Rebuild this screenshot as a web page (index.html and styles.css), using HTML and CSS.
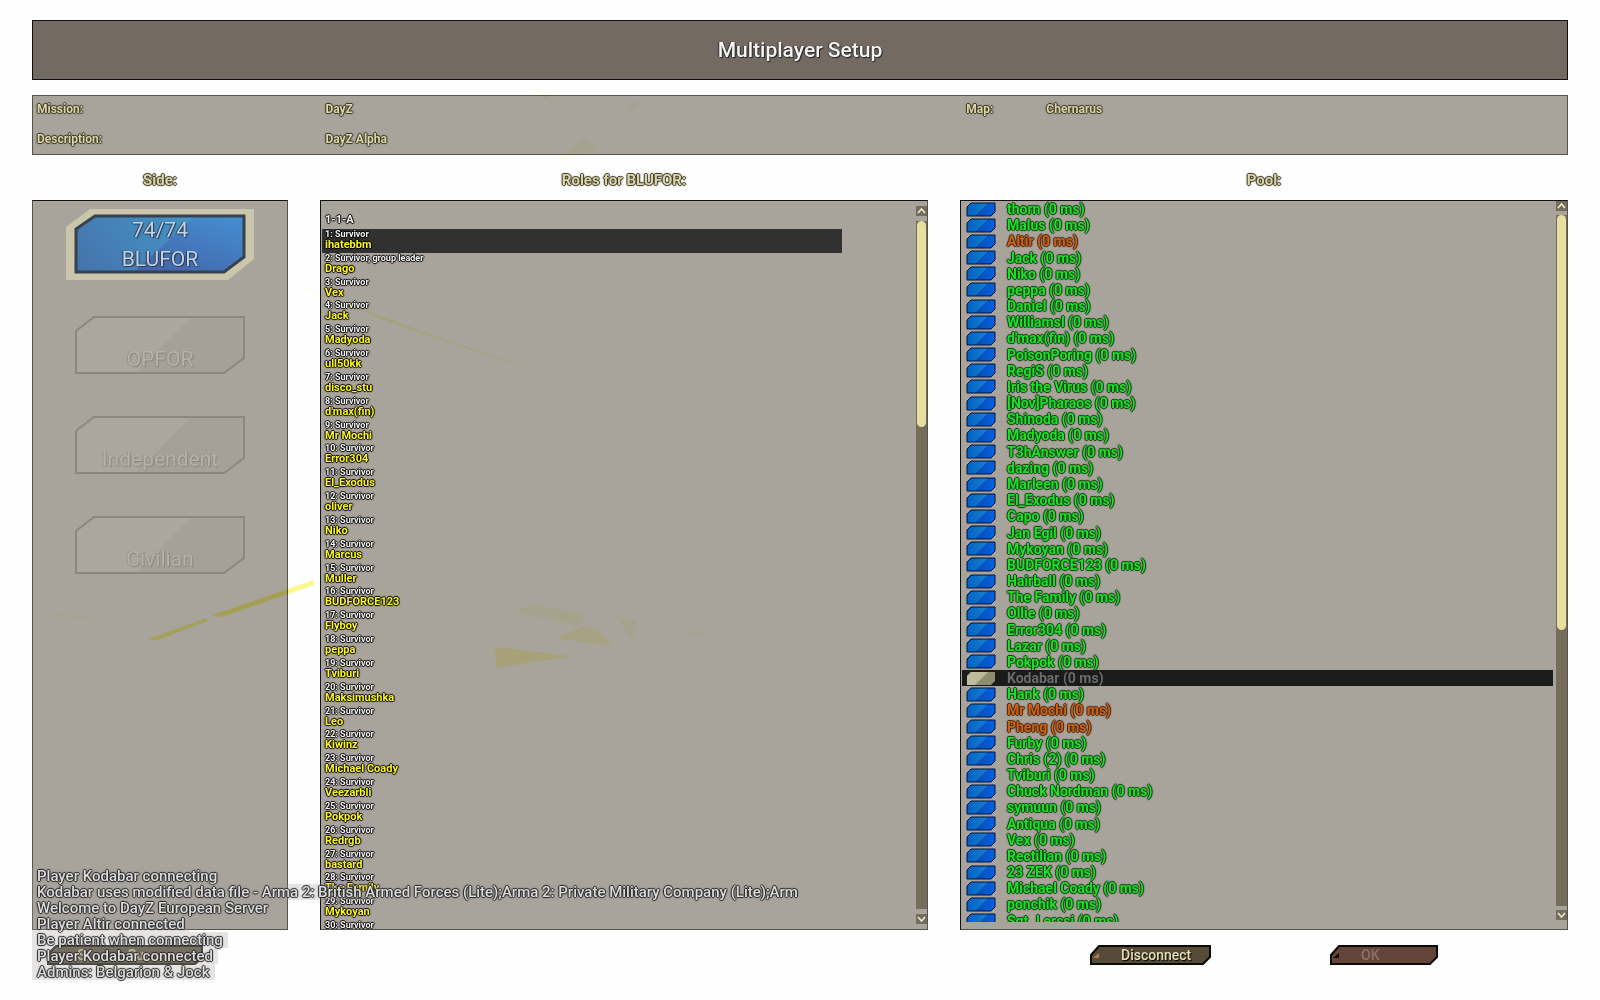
FILE: index.html
```html
<!DOCTYPE html>
<html lang="en">
<head>
    <meta charset="UTF-8">
    <meta name="viewport" content="width=device-width, initial-scale=1.0">
    <title>Multiplayer Setup</title>
    <link rel="stylesheet" href="styles.css">
</head>
<body>
    <!-- shared shapes -->
    <svg class="defs" width="0" height="0" aria-hidden="true">
        <defs>
            <linearGradient id="light" x1="0" y1="0" x2="1" y2="0">
                <stop offset="0" stop-color="#0560c0"/>
                <stop offset="1" stop-color="#1284d4"/>
            </linearGradient>
            <linearGradient id="dark" x1="0" y1="0" x2="1" y2="0">
                <stop offset="0" stop-color="#0a3f98"/>
                <stop offset="1" stop-color="#0562e2"/>
            </linearGradient>
            <linearGradient id="sideblue" x1="0" y1="0" x2="1" y2="0">
                <stop offset="0" stop-color="#4580b0"/>
                <stop offset="1" stop-color="#459fc8"/>
            </linearGradient>
            <linearGradient id="sidedark" x1="1" y1="0" x2="0" y2="1">
                <stop offset="0" stop-color="#4490d2"/>
                <stop offset="1" stop-color="#4558a0"/>
            </linearGradient>
            <symbol id="flag" viewBox="0 0 30 15">
                <path d="M5 1H29V10L25 14H1V5Z" fill="url(#dark)"/>
                <path d="M5 1H22L9 14H1V5Z" fill="url(#light)"/>
                <path d="M5 1H29V10L25 14H1V5Z" fill="none" stroke="#04123c"/>
            </symbol>
            <symbol id="flag-off" viewBox="0 0 30 15">
                <path d="M5 1H29V10L25 14H1V5Z" fill="#8f8c70"/>
                <path d="M5 1H22L9 14H1V5Z" fill="#bebb9c"/>
            </symbol>
            <symbol id="plate" viewBox="0 0 170 58">
                <path d="M19 1H169V42L149 57H1V15Z" fill="#a6a198"/>
                <path d="M19 1H117L60 57H1V15Z" fill="#aba79e"/>
                <path d="M19 1H169V42L149 57H1V15Z" fill="none" stroke="#8c8880" stroke-width="2"/>
            </symbol>
        </defs>
    </svg>

    <div class="screen">
        <header class="title"><h1>Multiplayer Setup</h1></header>

        <section class="info">
            <span>Mission:</span><span>DayZ</span><span>Map:</span><span>Chernarus</span>
            <span>Description:</span><span>DayZ Alpha</span>
        </section>

        <main class="columns">
            <section class="column">
                <h2>Side:</h2>
                <div class="panel sides">
                    <button class="side side-active">
                        <svg viewBox="0 0 188 72" width="188" height="72" aria-hidden="true">
                            <path d="M24 0H188V50L162 71H0V18Z" fill="#cbc5ab"/>
                            <path d="M29 7H178V48L158 63H10V20Z" fill="url(#sidedark)"/>
                            <path d="M29 7H129L68 63H10V20Z" fill="url(#sideblue)" opacity="0.65"/>
                            <path d="M29 7H178V48L158 63H10V20Z" fill="none" stroke="#36424c" stroke-width="3"/>
                        </svg>
                        <span>74/74</span><span>BLUFOR</span>
                    </button>
                    <button class="side" disabled><svg width="170" height="58"><use href="#plate"/></svg><span>OPFOR</span></button>
                    <button class="side" disabled><svg width="170" height="58"><use href="#plate"/></svg><span>Independent</span></button>
                    <button class="side" disabled><svg width="170" height="58"><use href="#plate"/></svg><span>Civilian</span></button>
                </div>
            </section>

            <section class="column">
                <h2>Roles for BLUFOR:</h2>
                <div class="panel roles">
                    <div class="role-list">
                        <h3>1-1-A</h3>
                        <ul>
                            <li class="selected"><small>1: Survivor</small><b>ihatebbm</b></li>
                            <li><small>2: Survivor, group leader</small><b>Drago</b></li>
                            <li><small>3: Survivor</small><b>Vex</b></li>
                            <li><small>4: Survivor</small><b>Jack</b></li>
                            <li><small>5: Survivor</small><b>Madyoda</b></li>
                            <li><small>6: Survivor</small><b>ull50kk</b></li>
                            <li><small>7: Survivor</small><b>disco_stu</b></li>
                            <li><small>8: Survivor</small><b>d'max(fin)</b></li>
                            <li><small>9: Survivor</small><b>Mr Mochi</b></li>
                            <li><small>10: Survivor</small><b>Error304</b></li>
                            <li><small>11: Survivor</small><b>El_Exodus</b></li>
                            <li><small>12: Survivor</small><b>oliver</b></li>
                            <li><small>13: Survivor</small><b>Niko</b></li>
                            <li><small>14: Survivor</small><b>Marcus</b></li>
                            <li><small>15: Survivor</small><b>Muller</b></li>
                            <li><small>16: Survivor</small><b>BUDFORCE123</b></li>
                            <li><small>17: Survivor</small><b>Flyboy</b></li>
                            <li><small>18: Survivor</small><b>peppa</b></li>
                            <li><small>19: Survivor</small><b>Tviburi</b></li>
                            <li><small>20: Survivor</small><b>Maksimushka</b></li>
                            <li><small>21: Survivor</small><b>Leo</b></li>
                            <li><small>22: Survivor</small><b>Kiwinz</b></li>
                            <li><small>23: Survivor</small><b>Michael Coady</b></li>
                            <li><small>24: Survivor</small><b>Veezarbli</b></li>
                            <li><small>25: Survivor</small><b>Pokpok</b></li>
                            <li><small>26: Survivor</small><b>Redrgb</b></li>
                            <li><small>27: Survivor</small><b>bastard</b></li>
                            <li><small>28: Survivor</small><b>The Family</b></li>
                            <li><small>29: Survivor</small><b>Mykoyan</b></li>
                            <li class="cut"><small>30: Survivor</small></li>
                        </ul>
                    </div>
                    <div class="scrollbar">
                        <button aria-label="Scroll up"><svg viewBox="0 0 11 10"><path d="M2 7L5.5 3L9 7"/></svg></button>
                        <div class="track"><div class="thumb"></div></div>
                        <button aria-label="Scroll down"><svg viewBox="0 0 11 10"><path d="M2 3L5.5 7L9 3"/></svg></button>
                    </div>
                </div>
            </section>

            <section class="column">
                <h2>Pool:</h2>
                <div class="panel pool">
                    <ul class="pool-list">
                        <li><svg><use href="#flag"/></svg>thorn (0 ms)</li>
                        <li><svg><use href="#flag"/></svg>Malus (0 ms)</li>
                        <li class="waiting"><svg><use href="#flag"/></svg>Altir (0 ms)</li>
                        <li><svg><use href="#flag"/></svg>Jack (0 ms)</li>
                        <li><svg><use href="#flag"/></svg>Niko (0 ms)</li>
                        <li><svg><use href="#flag"/></svg>peppa (0 ms)</li>
                        <li><svg><use href="#flag"/></svg>Daniel (0 ms)</li>
                        <li><svg><use href="#flag"/></svg>Williamsl (0 ms)</li>
                        <li><svg><use href="#flag"/></svg>d'max(fin) (0 ms)</li>
                        <li><svg><use href="#flag"/></svg>PoisonPoring (0 ms)</li>
                        <li><svg><use href="#flag"/></svg>RegiS (0 ms)</li>
                        <li><svg><use href="#flag"/></svg>Iris the Virus (0 ms)</li>
                        <li><svg><use href="#flag"/></svg>[Nov]Pharaos (0 ms)</li>
                        <li><svg><use href="#flag"/></svg>Shinoda (0 ms)</li>
                        <li><svg><use href="#flag"/></svg>Madyoda (0 ms)</li>
                        <li><svg><use href="#flag"/></svg>T3hAnswer (0 ms)</li>
                        <li><svg><use href="#flag"/></svg>dazing (0 ms)</li>
                        <li><svg><use href="#flag"/></svg>Marleen (0 ms)</li>
                        <li><svg><use href="#flag"/></svg>El_Exodus (0 ms)</li>
                        <li><svg><use href="#flag"/></svg>Capo (0 ms)</li>
                        <li><svg><use href="#flag"/></svg>Jan Egil (0 ms)</li>
                        <li><svg><use href="#flag"/></svg>Mykoyan (0 ms)</li>
                        <li><svg><use href="#flag"/></svg>BUDFORCE123 (0 ms)</li>
                        <li><svg><use href="#flag"/></svg>Hairball (0 ms)</li>
                        <li><svg><use href="#flag"/></svg>The Family (0 ms)</li>
                        <li><svg><use href="#flag"/></svg>Ollie (0 ms)</li>
                        <li><svg><use href="#flag"/></svg>Error304 (0 ms)</li>
                        <li><svg><use href="#flag"/></svg>Lazar (0 ms)</li>
                        <li><svg><use href="#flag"/></svg>Pokpok (0 ms)</li>
                        <li class="me"><svg><use href="#flag-off"/></svg>Kodabar (0 ms)</li>
                        <li><svg><use href="#flag"/></svg>Hank (0 ms)</li>
                        <li class="waiting"><svg><use href="#flag"/></svg>Mr Mochi (0 ms)</li>
                        <li class="waiting"><svg><use href="#flag"/></svg>Pheng (0 ms)</li>
                        <li><svg><use href="#flag"/></svg>Furby (0 ms)</li>
                        <li><svg><use href="#flag"/></svg>Chris (2) (0 ms)</li>
                        <li><svg><use href="#flag"/></svg>Tviburi (0 ms)</li>
                        <li><svg><use href="#flag"/></svg>Chuck Nordman (0 ms)</li>
                        <li><svg><use href="#flag"/></svg>symuun (0 ms)</li>
                        <li><svg><use href="#flag"/></svg>Antiqua (0 ms)</li>
                        <li><svg><use href="#flag"/></svg>Vex (0 ms)</li>
                        <li><svg><use href="#flag"/></svg>Rectilian (0 ms)</li>
                        <li><svg><use href="#flag"/></svg>23 ZEK (0 ms)</li>
                        <li><svg><use href="#flag"/></svg>Michael Coady (0 ms)</li>
                        <li><svg><use href="#flag"/></svg>ponchik (0 ms)</li>
                        <li><svg><use href="#flag"/></svg>Sgt. Lerssi (0 ms)</li>
                    </ul>
                    <div class="scrollbar">
                        <button aria-label="Scroll up"><svg viewBox="0 0 11 10"><path d="M2 7L5.5 3L9 7"/></svg></button>
                        <div class="track"><div class="thumb"></div></div>
                        <button aria-label="Scroll down"><svg viewBox="0 0 11 10"><path d="M2 3L5.5 7L9 3"/></svg></button>
                    </div>
                </div>
            </section>
        </main>

        <footer class="actions">
            <button class="action action-side">
                <svg viewBox="0 0 156 20" preserveAspectRatio="none"><path d="M9 1H155V13L148 19H1V9Z" fill="#655b4b" stroke="#2b2722" stroke-width="2"/></svg>
                <span class="words"><span>S</span><span>Sur</span></span>
            </button>
            <button class="action action-leave">
                <svg viewBox="0 0 121 20" preserveAspectRatio="none"><path d="M9 1H120V12L113 19H1V10Z" fill="#554b38" stroke="#0c0a07" stroke-width="2"/><path d="M9 8V13H3Z" fill="#b5794a"/></svg>
                <span>Disconnect</span>
            </button>
            <button class="action action-ok" disabled>
                <svg viewBox="0 0 108 20" preserveAspectRatio="none"><path d="M9 1H107V12L100 19H1V10Z" fill="#634639" stroke="#0c0807" stroke-width="2"/><path d="M9 8V13H3Z" fill="#120b08"/></svg>
                <span>OK</span>
            </button>
        </footer>

        <!-- yellow light streaks from the scene behind -->
        <svg class="streaks" viewBox="0 0 1600 1000" preserveAspectRatio="none" aria-hidden="true">
            <g fill="#f6f000">
                <path d="M148 639L206 618L208 621L158 640Z" opacity="0.4"/>
                <path d="M212 615L314 580V585L222 617Z" opacity="0.45"/>
                <path d="M285 281L400 323L545 375L400 326Z" opacity="0.2"/>
                <path d="M45 612L150 626L60 616Z" opacity="0.08"/>
                <path d="M495 647L570 656L496 668Z" opacity="0.22"/>
                <path d="M515 612L530 604L585 614L580 626Z" opacity="0.1"/>
                <path d="M555 638L585 626L598 630L612 646Z" opacity="0.16"/>
                <path d="M615 616L637 620L632 641Z" opacity="0.08"/>
                <path d="M686 633L706 632L696 636Z" opacity="0.12"/>
                <path d="M533 88L543 90L566 115Z" opacity="0.08"/>
                <path d="M645 100L622 116L632 104Z" opacity="0.08"/>
                <path d="M555 163L585 138L598 148Z" opacity="0.08"/>
            </g>
        </svg>

        <div class="chat">
            <p>Player Kodabar connecting</p>
            <p>Kodabar uses modified data file - Arma 2: British Armed Forces (Lite);Arma 2: Private Military Company (Lite);Arm</p>
            <p>Welcome to DayZ European Server</p>
            <p>Player Altir connected</p>
            <p>Be patient when connecting</p>
            <p>Player Kodabar connected</p>
            <p>Admins: Belgarion &amp; Jock</p>
        </div>
    </div>
</body>
</html>
```
FILE: styles.css
```css
* {
    box-sizing: border-box;
}

body {
    margin: 0;
    background-color: #fefefe;
    font-family: Roboto, "Liberation Sans", sans-serif;
}

h1, h2, h3, p, ul {
    margin: 0;
    padding: 0;
}

ul {
    list-style: none;
}

button {
    border: none;
    padding: 0;
    background: none;
    font-family: inherit;
}

svg {
    display: block;
}

.defs {
    position: absolute;
}

.screen {
    position: relative;
    display: flex;
    flex-direction: column;
    min-height: 100vh;
    padding: 20px 2% 0;
}

.title {
    display: flex;
    align-items: center;
    justify-content: center;
    height: 60px;
    background-color: #736a62;
    border: 1px solid #111;
}

.title h1 {
    font-size: 21px;
    font-weight: 500;
    color: #f4f4f2;
    text-shadow: 1px 1px 1px #222, -1px 0 1px #333;
}

.info {
    display: grid;
    grid-template-columns: 288fr 640fr 80fr 520fr;
    grid-auto-rows: 30px;
    height: 60px;
    margin-top: 15px;
    padding-left: 4px;
    background-color: #a8a39b;
    border: 1px solid #55524e;
    font-size: 12px;
    line-height: 27px;
}

.info,
.column h2 {
    font-weight: bold;
    color: #ddd6aa;
    text-shadow: 1px 0 1px #35321e, -1px 0 1px #35321e, 0 1px 1px #35321e, 0 -1px 1px #35321e;
}

.columns {
    flex: 1;
    display: grid;
    grid-template-columns: 256fr 608fr 608fr;
    gap: 32px;
}

.column {
    display: flex;
    flex-direction: column;
}

.column h2 {
    height: 45px;
    font-size: 15px;
    line-height: 51px;
    text-align: center;
}

.panel {
    flex: 1;
    background-color: #a8a39b;
    border: 1px solid #55524e;
    border-top-color: #111;
}

/* side buttons */
.sides {
    display: flex;
    flex-direction: column;
    align-items: center;
    gap: 42px;
    padding-top: 8px;
}

.side {
    display: grid;
    justify-items: center;
    align-items: end;
    font-size: 21px;
    line-height: 29px;
}

.side svg,
.side span {
    grid-area: 1 / 1;
}

.side:disabled {
    color: #b6b2aa;
    text-shadow: 1px 1px 1px #8a867e, -1px 0 1px #96928a;
}

.side-active {
    align-items: center;
    grid-template-rows: 36px 36px;
    margin-bottom: -7px;
    color: #bfd4e6;
    text-shadow: 1px 1px 1px #2b3a50, -1px 0 1px #2b3a50;
}

.side-active svg {
    grid-row: 1 / 3;
}

.side-active span {
    align-self: end;
}

.side-active span:last-child {
    grid-row: 2;
    align-self: start;
}

/* role list */
.roles,
.pool {
    display: flex;
    justify-content: space-between;
    border-left-color: #111;
}

.role-list {
    width: 86%;
    display: flex;
    flex-direction: column;
    padding-left: 1px;
    color: #f4f4f4;
    text-shadow: 1px 0 1px #000, -1px 0 1px #000, 0 1px 1px #000, 0 -1px 1px #000;
}

.role-list h3 {
    height: 28px;
    padding-left: 3px;
    font-size: 11px;
    line-height: 38px;
}

.role-list ul {
    flex: 1;
    display: flex;
    flex-direction: column;
}

.role-list li {
    flex: 24 1 0;
    min-height: 0;
    padding-left: 3px;
    overflow: hidden;
}

.role-list .cut {
    flex-grow: 9;
}

.role-list .selected {
    background-color: #313131;
}

.role-list small,
.role-list b {
    display: block;
}

.role-list small {
    font-size: 9px;
    font-weight: bold;
    line-height: 10px;
}

.role-list b {
    color: #fbf61e;
    font-size: 11px;
    line-height: 12px;
}

/* player pool */
.pool-list {
    flex: 1;
    display: flex;
    flex-direction: column;
    margin: 0 3px 0 1px;
    clip-path: inset(0 0 7px 0);
}

.pool-list li {
    flex: 1 1 0;
    min-height: 0;
    display: flex;
    align-items: center;
    gap: 11px;
    padding-left: 4px;
    color: #1ee028;
    font-size: 14px;
    font-weight: bold;
    line-height: 16px;
    text-shadow: 1px 0 1px #083c0a, -1px 0 1px #083c0a, 0 1px 1px #083c0a, 0 -1px 1px #083c0a;
}

.pool-list svg {
    width: 30px;
    height: 15px;
}

.pool-list .waiting {
    color: #c8641a;
    text-shadow: 1px 0 1px #4a2208, -1px 0 1px #4a2208, 0 1px 1px #4a2208, 0 -1px 1px #4a2208;
}

.pool-list .me {
    background-color: #1b1b1b;
    color: #6a6a6a;
    text-shadow: none;
}

/* scrollbars */
.scrollbar {
    display: flex;
    flex-direction: column;
    gap: 5px;
    width: 11px;
    padding: 5px 0;
}

.scrollbar button,
.scrollbar svg {
    width: 11px;
    height: 10px;
}

.scrollbar button {
    background-color: #756c5b;
}

.scrollbar path {
    fill: none;
    stroke: #f0ecd0;
    stroke-width: 1.5;
}

.track {
    flex: 1;
    padding: 0 1px;
    background-color: #756c5b;
}

.thumb {
    height: 30%;
    background-color: #e7df9e;
    border-radius: 5px;
}

.pool .scrollbar {
    gap: 4px;
    padding: 0 0 9px;
}

.pool .thumb {
    height: 60%;
}

/* bottom buttons */
.actions {
    display: flex;
    height: 70px;
    padding: 15px 0 0 1%;
}

.action {
    display: grid;
    align-items: center;
    height: 20px;
    font-size: 14px;
    font-weight: 500;
    line-height: 20px;
    text-align: left;
}

.action > svg,
.action > span {
    grid-area: 1 / 1;
}

.action > svg {
    width: 100%;
    height: 20px;
}

.action-side {
    width: 156px;
    color: #d3c99c;
}

.words {
    display: flex;
    gap: 42px;
    padding-left: 30px;
}

.action-leave {
    width: 121px;
    margin-left: auto;
    color: #e6dfb4;
    text-shadow: 1px 1px 1px #000;
}

.action-leave span,
.action-ok span {
    padding-left: 31px;
}

.action-ok {
    width: 108px;
    margin: 0 130px 0 119px;
    color: #8a7468;
}

.streaks {
    position: absolute;
    inset: 0;
    width: 100%;
    height: 100%;
    mix-blend-mode: multiply;
    pointer-events: none;
}

/* chat log lies over the panels */
.chat {
    position: absolute;
    left: 2%;
    bottom: 20px;
    display: flex;
    flex-direction: column;
    align-items: flex-start;
    color: #dcdcdc;
    font-size: 15px;
    font-weight: 500;
    line-height: 16px;
    text-shadow: 1px 0 1px #222, -1px 0 1px #222, 0 1px 1px #222, 0 -1px 1px #222;
}

.chat p {
    padding: 0 5px;
    background-color: rgba(165, 161, 155, 0.28);
}
```
